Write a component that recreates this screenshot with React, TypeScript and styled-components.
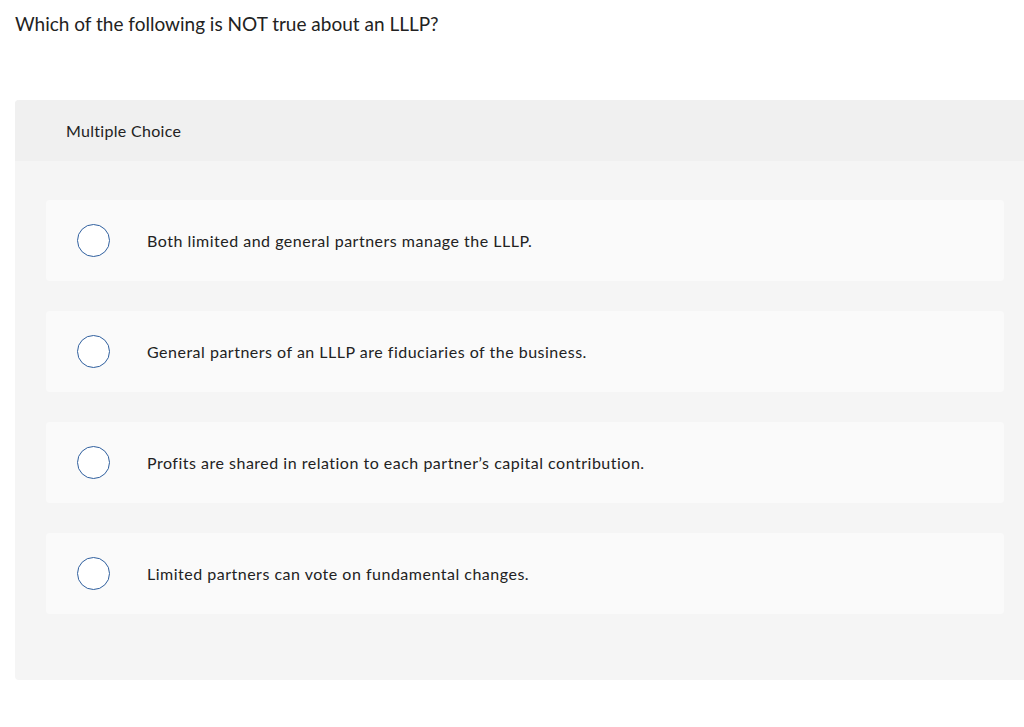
import React from "react";
import styled, { createGlobalStyle } from "styled-components";

const Global = createGlobalStyle`
  html, body { margin: 0; padding: 0; background: #fff; overflow: hidden; }
  body { font-family: Lato, "Noto Sans", sans-serif; color: #222; }
`;

const Page = styled.div`
  width: 1024px;
  height: 727px;
  overflow: hidden;
  padding: 0 0 0 15px;
  box-sizing: border-box;
`;

const Question = styled.div`
  font-size: 19px;
  line-height: 24px;
  padding-top: 12px;
  height: 100px;
  box-sizing: border-box;
  color: #222;
`;

const Panel = styled.div`
  width: 1020px;
  flex-shrink: 0;
  border-radius: 4px;
  background: #f5f5f5;
  overflow: hidden;
  height: 580px;
`;

const Header = styled.div`
  height: 61px;
  background: #f0f0f0;
  display: flex;
  align-items: center;
  padding-left: 51px;
  font-size: 16px;
  letter-spacing: 0.3px;
  color: #222;
`;

const List = styled.div`
  display: flex;
  flex-direction: column;
  gap: 30px;
  padding: 39px 31px 0 31px;
`;

const Option = styled.div`
  height: 81px;
  background: #fafafa;
  border-radius: 4px;
  display: flex;
  align-items: center;
  padding-left: 31px;
`;

const Radio = styled.span`
  width: 31px;
  height: 31px;
  border-radius: 50%;
  border: 1.5px solid #2f5f9e;
  background: #fff;
  flex-shrink: 0;
`;

const Label = styled.span`
  margin-left: 37px;
  font-size: 16px;
  letter-spacing: 0.5px;
  color: #222;
`;

const options = [
  "Both limited and general partners manage the LLLP.",
  "General partners of an LLLP are fiduciaries of the business.",
  "Profits are shared in relation to each partner\u2019s capital contribution.",
  "Limited partners can vote on fundamental changes.",
];

export default function App() {
  return (
    <>
      <Global />
      <Page>
        <Question>Which of the following is NOT true about an LLLP?</Question>
        <Panel>
          <Header>Multiple Choice</Header>
          <List>
            {options.map((o) => (
              <Option key={o}>
                <Radio />
                <Label>{o}</Label>
              </Option>
            ))}
          </List>
        </Panel>
      </Page>
    </>
  );
}
